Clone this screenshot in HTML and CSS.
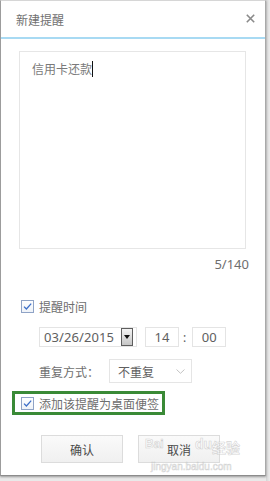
FILE: index.html
```html
<!DOCTYPE html>
<html>
<head>
<meta charset="utf-8">
<link rel="stylesheet" href="styles.css">
</head>
<body>
<div class="page">
  <div class="dialog">
    <div class="header">
      <span class="title">新建提醒</span>
      <svg class="close" width="9" height="9" viewBox="0 0 9 9"><path d="M0.8 0.8 L8.2 8.2 M8.2 0.8 L0.8 8.2" stroke="#8a8a8a" stroke-width="1.6" fill="none"/></svg>
    </div>
    <div class="content">
      <div class="textarea"><span class="typed">信用卡还款</span><span class="caret"></span></div>
      <div class="counter">5/140</div>
      <div class="check-row">
        <svg class="cb" width="13" height="13" viewBox="0 0 13 13"><defs><linearGradient id="g1" x1="0" y1="0" x2="0" y2="1"><stop offset="0" stop-color="#ffffff"/><stop offset="1" stop-color="#eef2f8"/></linearGradient></defs><rect x="0.5" y="0.5" width="12" height="12" fill="url(#g1)" stroke="#8fa3c6"/><path d="M3 6.6 L5.4 9 L10.2 3.6" stroke="#3d6fc8" stroke-width="1.3" fill="none"/></svg>
        <span class="label">提醒时间</span>
      </div>
      <div class="date-row">
        <div class="date-box">
          <span class="date-text">03/26/2015</span>
          <span class="drop-btn"><span class="tri"></span></span>
        </div>
        <div class="num-box">14</div>
        <span class="colon">:</span>
        <div class="num-box">00</div>
      </div>
      <div class="repeat-row">
        <span class="label">重复方式：</span>
        <div class="select">
          <span class="sel-text">不重复</span>
          <svg width="9" height="5" viewBox="0 0 9 5"><path d="M0.5 0.5 L4.5 4.3 L8.5 0.5" stroke="#c4c4c4" stroke-width="1" fill="none"/></svg>
        </div>
      </div>
      <div class="highlight">
        <svg class="cb" width="13" height="13" viewBox="0 0 13 13"><defs><linearGradient id="g2" x1="0" y1="0" x2="0" y2="1"><stop offset="0" stop-color="#ffffff"/><stop offset="1" stop-color="#eef2f8"/></linearGradient></defs><rect x="0.5" y="0.5" width="12" height="12" fill="url(#g2)" stroke="#8fa3c6"/><path d="M3 6.6 L5.4 9 L10.2 3.6" stroke="#3d6fc8" stroke-width="1.3" fill="none"/></svg>
        <span class="label">添加该提醒为桌面便签</span>
      </div>
      <div class="buttons">
        <div class="btn">确认</div>
        <div class="btn">取消</div>
      </div>
    </div>
    <div class="watermark">
      <span class="wm-bai">Bai</span><span class="wm-du">du</span><span class="wm-jy">经验</span>
      <span class="wm-url">jingyan.baidu.com</span>
    </div>
  </div>
  <div class="strip"></div>
</div>
</body>
</html>
```

FILE: styles.css
```css
html, body {
  margin: 0;
  padding: 0;
}
body {
  width: 270px;
  height: 481px;
  overflow: hidden;
  background: #e9e9e9;
  font-family: "Noto Sans", "Noto Sans CJK SC", sans-serif;
}
.page {
  display: flex;
  height: 481px;
}
.dialog {
  position: relative;
  box-sizing: border-box;
  width: 266px;
  height: 476px;
  background: #ffffff;
  border-left: 1px solid #9c9c9c;
  border-top: 1px solid #d6d6d6;
  border-right: 1px solid #a9a9a9;
  border-bottom: 1px solid #8c8c8c;
  box-shadow: 0 1px 2px rgba(0,0,0,0.35);
  display: flex;
  flex-direction: column;
}
.strip {
  flex: 1;
  background: linear-gradient(to right, #d4d4d4, #ececec);
}
.header {
  height: 36px;
  border-bottom: 2px solid #a8daf3;
  display: flex;
  align-items: center;
  justify-content: space-between;
  padding: 0 10px 0 15px;
}
.title {
  font-family: "Noto Sans CJK SC", sans-serif;
  font-size: 12px;
  color: #707070;
}
.close {
  display: block;
  margin-top: -1px;
}
.content {
  padding: 12px 16px 0 18px;
  display: flex;
  flex-direction: column;
}
.textarea {
  box-sizing: border-box;
  width: 227px;
  height: 198px;
  border: 1px solid #e6e6e6;
  padding: 8px 12px;
  font-family: "Noto Sans CJK SC", sans-serif;
  font-size: 12px;
  line-height: 18px;
  color: #7a7a7a;
  display: flex;
  align-items: flex-start;
}
.caret {
  display: inline-block;
  width: 1px;
  height: 16px;
  background: #111;
  margin-top: 1px;
}
.counter {
  margin-top: 7px;
  text-align: right;
  font-size: 13px;
  line-height: 16px;
  color: #6e6e6e;
}
.check-row {
  margin-top: 26px;
  height: 16px;
  display: flex;
  align-items: center;
  padding-left: 2px;
}
.cb {
  display: block;
  flex: none;
}
.label {
  font-family: "Noto Sans CJK SC", sans-serif;
  font-size: 12px;
  color: #6e6e6e;
  margin-left: 5px;
}
.date-row {
  margin-top: 13px;
  height: 20px;
  display: flex;
  align-items: center;
  padding-left: 20px;
}
.date-box {
  box-sizing: border-box;
  width: 98px;
  height: 20px;
  border: 1px solid #e4e4e4;
  display: flex;
  align-items: center;
  justify-content: space-between;
  padding: 0 3px 0 4px;
}
.date-text {
  font-size: 13px;
  color: #606060;
  letter-spacing: 0.1px;
}
.drop-btn {
  box-sizing: border-box;
  width: 12px;
  height: 18px;
  border: 1px solid #5e5e5e;
  background: linear-gradient(to bottom, #f4f4f4, #c6c6c6);
  display: flex;
  align-items: center;
  justify-content: center;
}
.tri {
  width: 0;
  height: 0;
  border-left: 3px solid transparent;
  border-right: 3px solid transparent;
  border-top: 4px solid #111;
}
.num-box {
  box-sizing: border-box;
  width: 34px;
  height: 20px;
  border: 1px solid #e4e4e4;
  margin-left: 8px;
  font-size: 13px;
  color: #606060;
  display: flex;
  align-items: center;
  justify-content: center;
}
.colon {
  font-size: 12px;
  color: #606060;
  margin-left: 4px;
  margin-right: -2px;
}
.repeat-row {
  margin-top: 12px;
  height: 24px;
  display: flex;
  align-items: center;
  padding-left: 15px;
}
.select {
  box-sizing: border-box;
  width: 83px;
  height: 24px;
  margin-left: 10px;
  border: 1px solid #e5e5e5;
  display: flex;
  align-items: center;
  justify-content: space-between;
  padding: 0 6px 0 8px;
}
.sel-text {
  font-family: "Noto Sans CJK SC", sans-serif;
  font-size: 12px;
  color: #606060;
}
.highlight {
  box-sizing: border-box;
  margin-top: 8px;
  margin-left: -7px;
  width: 153px;
  height: 24px;
  border: 3px solid #3a8a36;
  display: flex;
  align-items: center;
  padding-left: 6px;
}
.buttons {
  margin-top: 20px;
  display: flex;
  gap: 15px;
  padding-left: 22px;
}
.btn {
  box-sizing: border-box;
  width: 82px;
  height: 28px;
  border: 1px solid #dcdcdc;
  background: linear-gradient(to bottom, #fafafa, #f0f0f0);
  font-family: "Noto Sans CJK SC", sans-serif;
  font-size: 12px;
  color: #4a4a4a;
  display: flex;
  align-items: center;
  justify-content: center;
}
.watermark {
  position: absolute;
  left: 150px;
  top: 433px;
  width: 110px;
  height: 42px;
  pointer-events: none;
  color: rgba(255,255,255,0.6);
  -webkit-text-stroke: 0.6px rgba(170,170,170,0.5);
  font-family: "Liberation Sans", sans-serif;
  font-weight: bold;
}
.wm-bai {
  position: absolute;
  left: -6px;
  top: 3px;
  font-size: 12px;
}
.wm-du {
  position: absolute;
  left: 44px;
  top: 2px;
  font-size: 14px;
}
.wm-jy {
  position: absolute;
  left: 61px;
  top: 3px;
  font-family: "Noto Sans CJK SC", sans-serif;
  font-size: 14px;
}
.wm-url {
  position: absolute;
  left: 0;
  top: 27px;
  font-size: 10px;
  line-height: 11px;
  font-weight: normal;
}
```
